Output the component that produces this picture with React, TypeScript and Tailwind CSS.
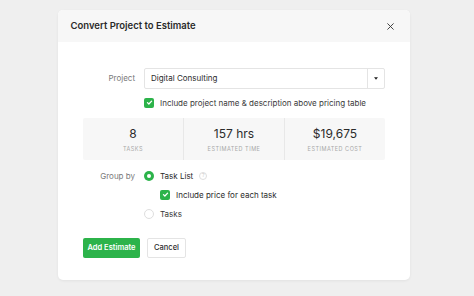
import React from "react";

const CheckBox = () => (
  <span className="flex h-[10px] w-[10px] shrink-0 items-center justify-center rounded-[2px] bg-[#2cb34a]">
    <svg width="7" height="7" viewBox="0 0 12 12" fill="none">
      <path d="M2.5 6.2l2.4 2.4L9.6 3.6" stroke="white" strokeWidth="2.2" strokeLinecap="round" strokeLinejoin="round" />
    </svg>
  </span>
);

const Stat = ({ value, label, last }: { value: string; label: string; last?: boolean }) => (
  <div className={`flex flex-1 flex-col items-center pt-[9.5px] ${last ? "" : "border-r border-[#e8e8e8]"}`}>
    <div className="text-[12px] leading-[14px] text-[#2b2b2b]">{value}</div>
    <div className="mt-[4px] text-[5.5px] leading-[8px] uppercase tracking-[0.5px] text-[#a8a8a8]">{label}</div>
  </div>
);

export default function App() {
  return (
    <div
      className="h-[296px] w-[474px] overflow-hidden bg-[#efefef] pt-[10px] pl-[58px]"
      style={{ fontFamily: "Inter, 'Liberation Sans', sans-serif" }}
    >
      <div className="flex h-[270px] w-[352px] flex-col overflow-hidden rounded-[5px] bg-white shadow-[0_1px_3px_rgba(0,0,0,0.06)]">
        {/* header */}
        <div className="flex h-[32px] items-center justify-between bg-[#f7f7f7] pl-[12.5px] pr-[16px]">
          <span className="text-[9.5px] font-semibold text-[#2a2a2a]">Convert Project to Estimate</span>
          <svg width="7" height="7" viewBox="0 0 10 10" className="text-[#333]">
            <path d="M1 1l8 8M9 1L1 9" stroke="currentColor" strokeWidth="1.3" strokeLinecap="round" />
          </svg>
        </div>

        <div className="flex flex-col pl-[25px] pr-[25px] pt-[25.5px]">
          {/* project */}
          <div className="flex items-center">
            <span className="w-[52px] whitespace-nowrap text-right text-[8px] text-[#7a7a7a]">Project</span>
            <div className="ml-[9px] flex h-[21px] flex-1 items-center rounded-[2px] border border-[#e4e4e4] bg-white">
              <span className="flex-1 pl-[6px] text-[8px] text-[#2b2b2b]">Digital Consulting</span>
              <span className="flex h-full w-[17px] items-center justify-center border-l border-[#e4e4e4]">
                <svg width="4" height="3" viewBox="0 0 5 3">
                  <path d="M0 0h5L2.5 3z" fill="#222" />
                </svg>
              </span>
            </div>
          </div>

          <div className="mt-[7px] ml-[61px] flex h-[14px] items-center gap-[6px]">
            <CheckBox />
            <span className="whitespace-nowrap text-[8px] text-[#3a3a3a]">
              Include project name &amp; description above pricing table
            </span>
          </div>

          {/* stats */}
          <div className="mt-[8px] flex h-[42px] rounded-[2px] bg-[#f7f7f7]">
            <Stat value="8" label="Tasks" />
            <Stat value="157 hrs" label="Estimated Time" />
            <Stat value="$19,675" label="Estimated Cost" last />
          </div>

          {/* group by */}
          <div className="mt-[9px] flex">
            <span className="flex h-[14px] w-[52px] items-center justify-end whitespace-nowrap text-[8px] text-[#7a7a7a]">
              Group by
            </span>
            <div className="ml-[9px] flex flex-col gap-[5px]">
              <div className="flex h-[14px] items-center gap-[6px]">
                <span className="flex h-[10px] w-[10px] items-center justify-center rounded-full bg-[#2cb34a]">
                  <span className="h-[4px] w-[4px] rounded-full bg-white" />
                </span>
                <span className="text-[8px] text-[#2b2b2b]">Task List</span>
                <span className="flex h-[8px] w-[8px] items-center justify-center rounded-full border border-[#dedede] text-[5px] text-[#ccc]">
                  ?
                </span>
              </div>
              <div className="ml-[16px] flex h-[14px] items-center gap-[6px]">
                <CheckBox />
                <span className="text-[8px] text-[#2b2b2b]">Include price for each task</span>
              </div>
              <div className="flex h-[14px] items-center gap-[6px]">
                <span className="h-[10px] w-[10px] rounded-full border border-[#dedede] bg-white" />
                <span className="text-[8px] text-[#3a3a3a]">Tasks</span>
              </div>
            </div>
          </div>

          {/* buttons */}
          <div className="mt-[17px] flex gap-[7px]">
            <button className="h-[20px] w-[57px] rounded-[2px] bg-[#2cb34a] text-[7.5px] font-semibold text-white">
              Add Estimate
            </button>
            <button className="h-[20px] w-[39px] rounded-[2px] border border-[#e4e4e4] bg-white text-[7.5px] font-medium text-[#2b2b2b]">
              Cancel
            </button>
          </div>
        </div>
      </div>
    </div>
  );
}
